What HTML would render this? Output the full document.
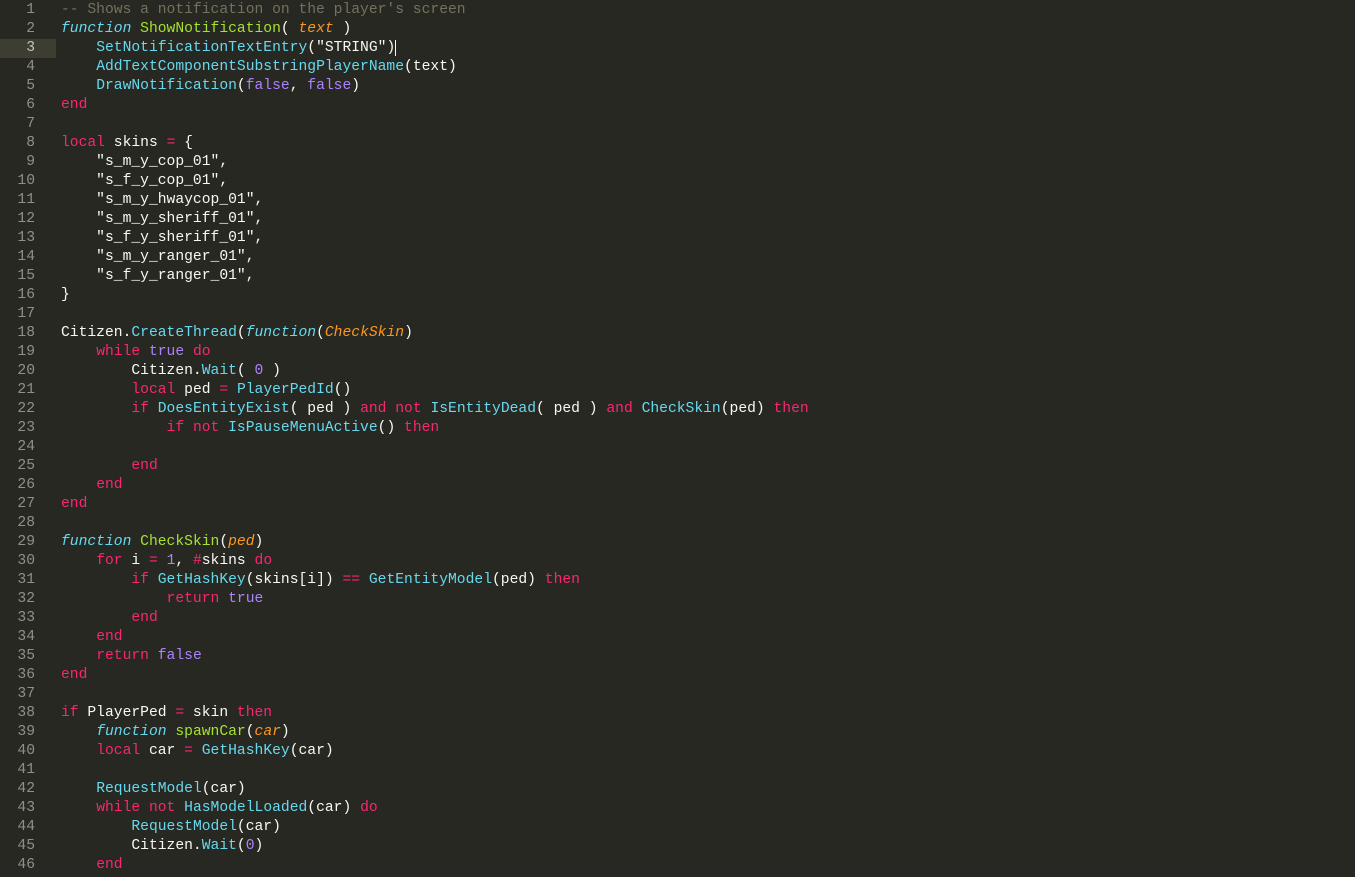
<!DOCTYPE html>
<html><head><meta charset="utf-8"><style>
body{margin:0;background:#272822;width:1355px;height:877px;overflow:hidden;font-family:"Liberation Mono",monospace;font-size:14.67px;}
.g{position:absolute;left:0;top:0;width:56px;}
.g div{height:19px;line-height:19px;text-align:right;padding-right:21px;color:#8F908A;box-sizing:border-box;width:56px}
.g .cur{background:#3E3D32;color:#C2C2BF}
.c{position:absolute;left:61px;top:1px;color:#F8F8F2}
.c div{height:19px;line-height:19px;white-space:pre}
.k{color:#F92672}.f{color:#66D9EF}.fi{color:#66D9EF;font-style:italic}.n{color:#A6E22E}.p{color:#FD971F;font-style:italic}.b{color:#AE81FF}.cm{color:#75715E}
.cursor{border-right:1.5px solid #F8F8F0}
</style></head><body>
<div class="g" style="top:1px">
<div>1</div><div>2</div><div class="cur">3</div><div>4</div><div>5</div><div>6</div><div>7</div><div>8</div><div>9</div><div>10</div><div>11</div><div>12</div><div>13</div><div>14</div><div>15</div><div>16</div><div>17</div><div>18</div><div>19</div><div>20</div><div>21</div><div>22</div><div>23</div><div>24</div><div>25</div><div>26</div><div>27</div><div>28</div><div>29</div><div>30</div><div>31</div><div>32</div><div>33</div><div>34</div><div>35</div><div>36</div><div>37</div><div>38</div><div>39</div><div>40</div><div>41</div><div>42</div><div>43</div><div>44</div><div>45</div><div>46</div>
</div>
<div class="c">
<div><span class="cm">-- Shows a notification on the player's screen</span></div>
<div><span class="fi">function</span> <span class="n">ShowNotification</span>( <span class="p">text</span> )</div>
<div>    <span class="f">SetNotificationTextEntry</span>("STRING"<span class="cursor">)</span></div>
<div>    <span class="f">AddTextComponentSubstringPlayerName</span>(text)</div>
<div>    <span class="f">DrawNotification</span>(<span class="b">false</span>, <span class="b">false</span>)</div>
<div><span class="k">end</span></div>
<div> </div>
<div><span class="k">local</span> skins <span class="k">=</span> {</div>
<div>    "s_m_y_cop_01",</div>
<div>    "s_f_y_cop_01",</div>
<div>    "s_m_y_hwaycop_01",</div>
<div>    "s_m_y_sheriff_01",</div>
<div>    "s_f_y_sheriff_01",</div>
<div>    "s_m_y_ranger_01",</div>
<div>    "s_f_y_ranger_01",</div>
<div>}</div>
<div> </div>
<div>Citizen.<span class="f">CreateThread</span>(<span class="fi">function</span>(<span class="p">CheckSkin</span>)</div>
<div>    <span class="k">while</span> <span class="b">true</span> <span class="k">do</span></div>
<div>        Citizen.<span class="f">Wait</span>( <span class="b">0</span> )</div>
<div>        <span class="k">local</span> ped <span class="k">=</span> <span class="f">PlayerPedId</span>()</div>
<div>        <span class="k">if</span> <span class="f">DoesEntityExist</span>( ped ) <span class="k">and</span> <span class="k">not</span> <span class="f">IsEntityDead</span>( ped ) <span class="k">and</span> <span class="f">CheckSkin</span>(ped) <span class="k">then</span></div>
<div>            <span class="k">if</span> <span class="k">not</span> <span class="f">IsPauseMenuActive</span>() <span class="k">then</span></div>
<div> </div>
<div>        <span class="k">end</span></div>
<div>    <span class="k">end</span></div>
<div><span class="k">end</span></div>
<div> </div>
<div><span class="fi">function</span> <span class="n">CheckSkin</span>(<span class="p">ped</span>)</div>
<div>    <span class="k">for</span> i <span class="k">=</span> <span class="b">1</span>, <span class="k">#</span>skins <span class="k">do</span></div>
<div>        <span class="k">if</span> <span class="f">GetHashKey</span>(skins[i]) <span class="k">==</span> <span class="f">GetEntityModel</span>(ped) <span class="k">then</span></div>
<div>            <span class="k">return</span> <span class="b">true</span></div>
<div>        <span class="k">end</span></div>
<div>    <span class="k">end</span></div>
<div>    <span class="k">return</span> <span class="b">false</span></div>
<div><span class="k">end</span></div>
<div> </div>
<div><span class="k">if</span> PlayerPed <span class="k">=</span> skin <span class="k">then</span></div>
<div>    <span class="fi">function</span> <span class="n">spawnCar</span>(<span class="p">car</span>)</div>
<div>    <span class="k">local</span> car <span class="k">=</span> <span class="f">GetHashKey</span>(car)</div>
<div> </div>
<div>    <span class="f">RequestModel</span>(car)</div>
<div>    <span class="k">while</span> <span class="k">not</span> <span class="f">HasModelLoaded</span>(car) <span class="k">do</span></div>
<div>        <span class="f">RequestModel</span>(car)</div>
<div>        Citizen.<span class="f">Wait</span>(<span class="b">0</span>)</div>
<div>    <span class="k">end</span></div>
</div>
</body></html>
